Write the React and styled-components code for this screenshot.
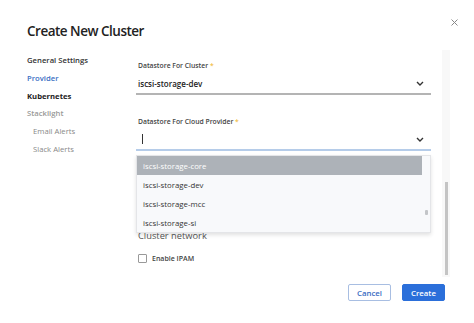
import React from "react"
import styled, {createGlobalStyle} from "styled-components"

const GlobalStyle = createGlobalStyle`
  body {
    margin: 0;
    background: #fff;
    font-family: "Open Sans", "Noto Sans", sans-serif;
  }
`

const Modal = styled.div`
  width: 474px;
  height: 323px;
  display: flex;
  flex-direction: column;
  overflow: hidden;
`

const Header = styled.div`
  height: 50px;
  box-sizing: border-box;
  display: flex;
  justify-content: space-between;
  align-items: flex-start;
  padding: 22px 15px 0 27px;
`

const Title = styled.h1`
  margin: 0;
  font-size: 13.5px;
  line-height: 18px;
  letter-spacing: -0.5px;
  font-weight: 600;
  color: #222;
`

const Close = styled.button`
  border: 0;
  background: none;
  padding: 0;
  margin-top: -5px;
  width: 10px;
  height: 10px;
  display: flex;
  align-items: center;
  justify-content: center;
`

const Body = styled.div`
  height: 227px;
  display: flex;
`

const Nav = styled.nav`
  width: 136px;
  flex-shrink: 0;
  box-sizing: border-box;
  padding: 2px 0 0 27px;
  display: flex;
  flex-direction: column;
`

const NavItem = styled.div`
  font-size: 7.7px;
  line-height: 17.8px;
  white-space: nowrap;
  padding-left: ${p => (p.$sub ? "6px" : "0")};
  font-weight: ${p => (p.$weight ? p.$weight : 400)};
  color: ${p => (p.$color ? p.$color : "#888")};
`

const ScrollArea = styled.div`
  display: flex;
  align-items: stretch;
`

const Content = styled.div`
  width: 295px;
  padding-top: 11px;
  display: flex;
  flex-direction: column;
`

const Field = styled.div`
  position: relative;
  margin-bottom: ${p => (p.$gap ? p.$gap : "22px")};
`

const Label = styled.div`
  font-size: 6.8px;
  line-height: 10px;
  font-weight: 600;
  color: #444;
  padding-left: 2px;
  margin-bottom: 3px;

  span {
    color: #f2c14e;
  }
`

const Select = styled.div`
  height: 21px;
  box-sizing: border-box;
  display: flex;
  align-items: center;
  justify-content: space-between;
  padding: 0 7px 1px 2px;
  border-bottom: 2px solid ${p => (p.$focus ? "#b5cce9" : "#b4b4b4")};
`

const Value = styled.div`
  font-size: 8px;
  font-weight: 600;
  color: #222;
`

const Caret = styled.div`
  width: 1px;
  height: 10px;
  margin-left: 4px;
  background: #333;
`

const Menu = styled.div`
  position: absolute;
  top: calc(100% + 4px);
  left: 0;
  width: 295px;
  height: 78px;
  box-sizing: border-box;
  display: flex;
  background: #f8f9fb;
  border: 1px solid #e4e5e8;
  box-shadow: 0 2px 4px rgba(0, 0, 0, 0.12);
`

const MenuList = styled.div`
  flex: 1;
  display: flex;
  flex-direction: column;
`

const MenuItem = styled.div`
  height: 19px;
  display: flex;
  align-items: center;
  padding-left: 6px;
  font-size: 7.8px;
  color: ${p => (p.$active ? "#fff" : "#333")};
  background: ${p => (p.$active ? "#adb2b8" : "transparent")};
`

const MenuTrack = styled.div`
  width: 8px;
  display: flex;
  justify-content: center;
  padding-top: 54px;
  box-sizing: border-box;
`

const MenuThumb = styled.div`
  width: 3px;
  height: 5px;
  border-radius: 1px;
  background: #c3c5c8;
`

const Section = styled.div`
  margin-top: 78px;
  padding-left: 2px;
  font-size: 9.3px;
  line-height: 14px;
  color: #555;
`

const CheckRow = styled.label`
  margin-top: 11px;
  padding-left: 2px;
  display: flex;
  align-items: center;
  gap: 5px;
  font-size: 7px;
  font-weight: 600;
  color: #444;
`

const Box = styled.span`
  width: 9px;
  height: 9px;
  box-sizing: border-box;
  border: 1px solid #999;
  border-radius: 1px;
  background: #fff;
`

const Track = styled.div`
  width: 8px;
  margin-left: 11px;
  background: #f8f8f8;
  display: flex;
  justify-content: center;
  padding-top: 132px;
  box-sizing: border-box;
`

const Thumb = styled.div`
  width: 3px;
  height: 93px;
  background: #c4c4c4;
`

const Footer = styled.div`
  display: flex;
  justify-content: flex-end;
  gap: 11px;
  padding: 7px 29px 0 0;
`

const Button = styled.button`
  width: 43px;
  height: 17px;
  box-sizing: border-box;
  padding: 0;
  border-radius: 2px;
  font-family: inherit;
  font-size: 7.8px;
  font-weight: 600;
  border: 1px solid ${p => (p.$primary ? "#2b6fda" : "#a8bee2")};
  background: ${p => (p.$primary ? "#2b6fda" : "#fff")};
  color: ${p => (p.$primary ? "#fff" : "#3a6cc2")};
`

const Chevron = () => (
  <svg width="8" height="5" viewBox="0 0 8 5">
    <path d="M1 1l3 3 3-3" fill="none" stroke="#333" strokeWidth="1.4" />
  </svg>
)

const navItems = [
  {label: "General Settings", weight: 600, color: "#333"},
  {label: "Provider", weight: 600, color: "#3b6fc4"},
  {label: "Kubernetes", weight: 700, color: "#222"},
  {label: "Stacklight", weight: 600, color: "#999"},
  {label: "Email Alerts", sub: true},
  {label: "Slack Alerts", sub: true},
]

const options = ["iscsi-storage-core", "iscsi-storage-dev", "iscsi-storage-mcc", "iscsi-storage-si"]

const App = () => (
  <>
    <GlobalStyle />
    <Modal>
      <Header>
        <Title>Create New Cluster</Title>
        <Close aria-label="Close">
          <svg width="7" height="7" viewBox="0 0 7 7">
            <path d="M0.5 0.5l6 6M6.5 0.5l-6 6" stroke="#888" strokeWidth="1" />
          </svg>
        </Close>
      </Header>
      <Body>
        <Nav>
          {navItems.map(item => (
            <NavItem key={item.label} $sub={item.sub} $weight={item.weight} $color={item.color}>
              {item.label}
            </NavItem>
          ))}
        </Nav>
        <ScrollArea>
          <Content>
            <Field>
              <Label>
                Datastore For Cluster <span>*</span>
              </Label>
              <Select>
                <Value>iscsi-storage-dev</Value>
                <Chevron />
              </Select>
            </Field>
            <Field $gap="0">
              <Label>
                Datastore For Cloud Provider <span>*</span>
              </Label>
              <Select $focus>
                <Caret />
                <Chevron />
              </Select>
              <Menu>
                <MenuList>
                  {options.map((o, i) => (
                    <MenuItem key={o} $active={i === 0}>
                      {o}
                    </MenuItem>
                  ))}
                </MenuList>
                <MenuTrack>
                  <MenuThumb />
                </MenuTrack>
              </Menu>
            </Field>
            <Section>Cluster network</Section>
            <CheckRow>
              <Box />
              Enable IPAM
            </CheckRow>
          </Content>
          <Track>
            <Thumb />
          </Track>
        </ScrollArea>
      </Body>
      <Footer>
        <Button>Cancel</Button>
        <Button $primary>Create</Button>
      </Footer>
    </Modal>
  </>
)

export default App
